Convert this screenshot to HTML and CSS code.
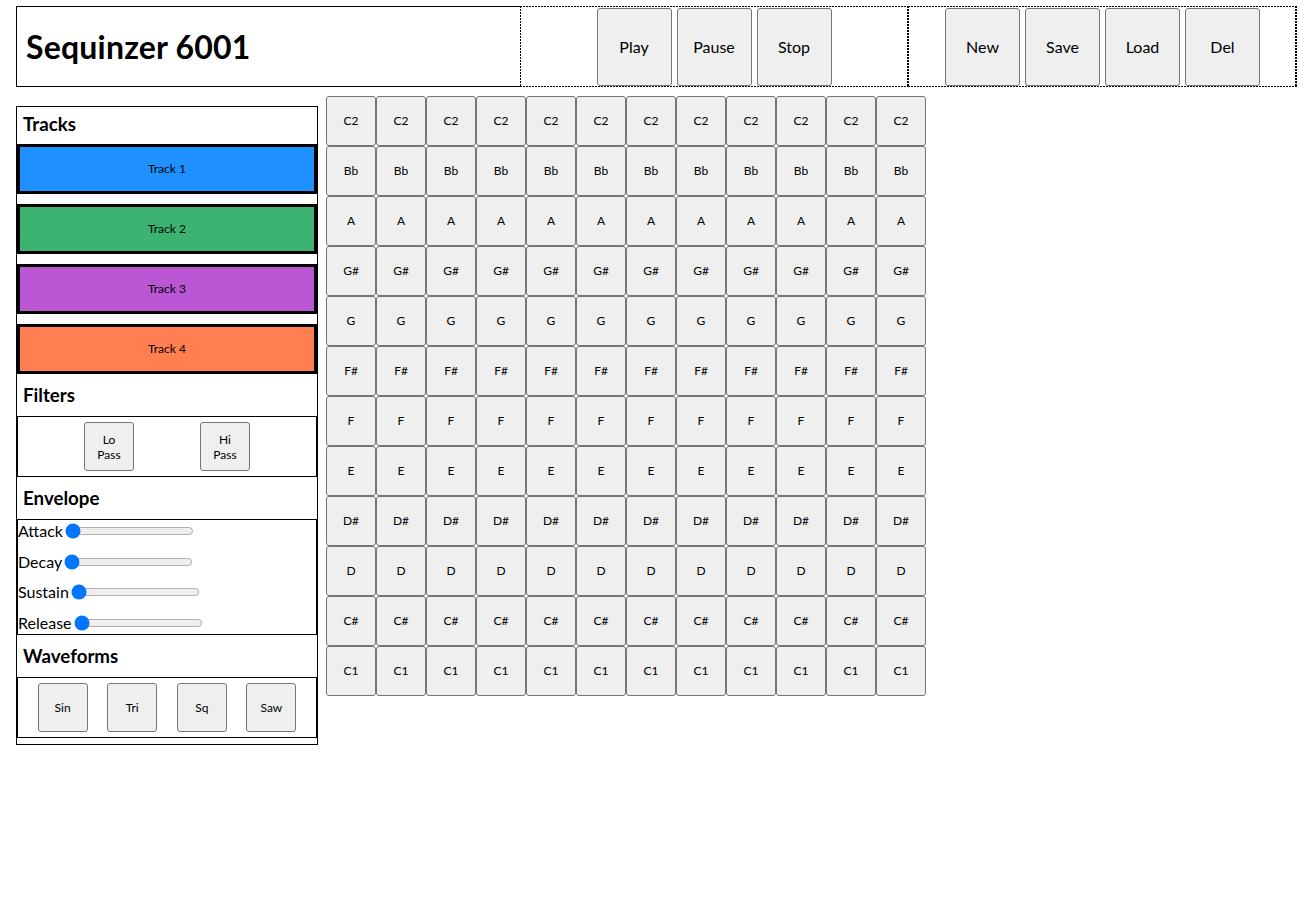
FILE: index.html
```html
<!DOCTYPE html>
<html>
<head>
<meta charset="utf-8">
<title>Sequinzer 6001</title>
<link rel="stylesheet" href="styles.css">
</head>
<body>
<div class="page">
  <header class="header">
    <div class="title-box"><h1 class="title">Sequinzer 6001</h1></div>
    <div class="group group-transport">
      <button class="hbtn">Play</button>
      <button class="hbtn">Pause</button>
      <button class="hbtn">Stop</button>
    </div>
    <div class="group group-file">
      <button class="hbtn">New</button>
      <button class="hbtn">Save</button>
      <button class="hbtn">Load</button>
      <button class="hbtn">Del</button>
    </div>
  </header>

  <main class="main">
    <aside class="sidebar">
      <h3 class="sec-title sec-tracks">Tracks</h3>
      <div class="tracks">
        <button class="track track-1">Track 1</button>
        <button class="track track-2">Track 2</button>
        <button class="track track-3">Track 3</button>
        <button class="track track-4">Track 4</button>
      </div>

      <h3 class="sec-title">Filters</h3>
      <div class="box btn-box">
        <button class="sbtn">Lo<br>Pass</button>
        <button class="sbtn">Hi<br>Pass</button>
      </div>

      <h3 class="sec-title">Envelope</h3>
      <div class="box env-box">
        <div class="env-row"><label class="env-label">Attack</label><input class="env-range" type="range" min="0" max="100" value="0"></div>
        <div class="env-row"><label class="env-label">Decay</label><input class="env-range" type="range" min="0" max="100" value="0"></div>
        <div class="env-row"><label class="env-label">Sustain</label><input class="env-range" type="range" min="0" max="100" value="0"></div>
        <div class="env-row"><label class="env-label">Release</label><input class="env-range" type="range" min="0" max="100" value="0"></div>
      </div>

      <h3 class="sec-title">Waveforms</h3>
      <div class="box btn-box">
        <button class="sbtn">Sin</button>
        <button class="sbtn">Tri</button>
        <button class="sbtn">Sq</button>
        <button class="sbtn">Saw</button>
      </div>
    </aside>

    <section class="grid">
      <button class="cell">C2</button><button class="cell">C2</button><button class="cell">C2</button><button class="cell">C2</button><button class="cell">C2</button><button class="cell">C2</button><button class="cell">C2</button><button class="cell">C2</button><button class="cell">C2</button><button class="cell">C2</button><button class="cell">C2</button><button class="cell">C2</button>
      <button class="cell">Bb</button><button class="cell">Bb</button><button class="cell">Bb</button><button class="cell">Bb</button><button class="cell">Bb</button><button class="cell">Bb</button><button class="cell">Bb</button><button class="cell">Bb</button><button class="cell">Bb</button><button class="cell">Bb</button><button class="cell">Bb</button><button class="cell">Bb</button>
      <button class="cell">A</button><button class="cell">A</button><button class="cell">A</button><button class="cell">A</button><button class="cell">A</button><button class="cell">A</button><button class="cell">A</button><button class="cell">A</button><button class="cell">A</button><button class="cell">A</button><button class="cell">A</button><button class="cell">A</button>
      <button class="cell">G#</button><button class="cell">G#</button><button class="cell">G#</button><button class="cell">G#</button><button class="cell">G#</button><button class="cell">G#</button><button class="cell">G#</button><button class="cell">G#</button><button class="cell">G#</button><button class="cell">G#</button><button class="cell">G#</button><button class="cell">G#</button>
      <button class="cell">G</button><button class="cell">G</button><button class="cell">G</button><button class="cell">G</button><button class="cell">G</button><button class="cell">G</button><button class="cell">G</button><button class="cell">G</button><button class="cell">G</button><button class="cell">G</button><button class="cell">G</button><button class="cell">G</button>
      <button class="cell">F#</button><button class="cell">F#</button><button class="cell">F#</button><button class="cell">F#</button><button class="cell">F#</button><button class="cell">F#</button><button class="cell">F#</button><button class="cell">F#</button><button class="cell">F#</button><button class="cell">F#</button><button class="cell">F#</button><button class="cell">F#</button>
      <button class="cell">F</button><button class="cell">F</button><button class="cell">F</button><button class="cell">F</button><button class="cell">F</button><button class="cell">F</button><button class="cell">F</button><button class="cell">F</button><button class="cell">F</button><button class="cell">F</button><button class="cell">F</button><button class="cell">F</button>
      <button class="cell">E</button><button class="cell">E</button><button class="cell">E</button><button class="cell">E</button><button class="cell">E</button><button class="cell">E</button><button class="cell">E</button><button class="cell">E</button><button class="cell">E</button><button class="cell">E</button><button class="cell">E</button><button class="cell">E</button>
      <button class="cell">D#</button><button class="cell">D#</button><button class="cell">D#</button><button class="cell">D#</button><button class="cell">D#</button><button class="cell">D#</button><button class="cell">D#</button><button class="cell">D#</button><button class="cell">D#</button><button class="cell">D#</button><button class="cell">D#</button><button class="cell">D#</button>
      <button class="cell">D</button><button class="cell">D</button><button class="cell">D</button><button class="cell">D</button><button class="cell">D</button><button class="cell">D</button><button class="cell">D</button><button class="cell">D</button><button class="cell">D</button><button class="cell">D</button><button class="cell">D</button><button class="cell">D</button>
      <button class="cell">C#</button><button class="cell">C#</button><button class="cell">C#</button><button class="cell">C#</button><button class="cell">C#</button><button class="cell">C#</button><button class="cell">C#</button><button class="cell">C#</button><button class="cell">C#</button><button class="cell">C#</button><button class="cell">C#</button><button class="cell">C#</button>
      <button class="cell">C1</button><button class="cell">C1</button><button class="cell">C1</button><button class="cell">C1</button><button class="cell">C1</button><button class="cell">C1</button><button class="cell">C1</button><button class="cell">C1</button><button class="cell">C1</button><button class="cell">C1</button><button class="cell">C1</button><button class="cell">C1</button>
    </section>
  </main>
</div>
</body>
</html>
```

FILE: styles.css
```css
* {
  box-sizing: border-box;
}

html, body {
  margin: 0;
  padding: 0;
  background: #ffffff;
}

body {
  font-family: "Lato", "Open Sans", "DejaVu Sans", sans-serif;
  color: #000000;
}

.page {
  padding: 6px 14px 0 16px;
}

/* ---------- header ---------- */
.header {
  display: flex;
  height: 81px;
  width: 1281px;
}

.title-box {
  width: 504px;
  height: 81px;
  border: 1px solid #000000;
  border-right: none;
  display: flex;
  align-items: center;
  padding-left: 9px;
}

.title {
  margin: 0;
  font-size: 32px;
  font-weight: 700;
  line-height: 1;
  letter-spacing: 0.2px;
}

/* dotted frames drawn as 2px-on / 1px-off dashes */
.group {
  height: 81px;
  display: flex;
  justify-content: center;
  align-items: flex-start;
  gap: 5px;
  padding-top: 2px;
  background-image:
    repeating-linear-gradient(90deg, #000 0 2px, transparent 2px 3px),
    repeating-linear-gradient(90deg, #000 0 2px, transparent 2px 3px),
    repeating-linear-gradient(180deg, #000 0 2px, transparent 2px 3px),
    repeating-linear-gradient(180deg, #000 0 2px, transparent 2px 3px);
  background-repeat: no-repeat;
  background-size: 100% 1px, 100% 1px, 1px 100%, 1px 100%;
  background-position: left top, left bottom, left top, right top;
}

.group-transport {
  width: 388px;
}

.group-file {
  width: 389px;
  background-size: 100% 1px, 100% 1px, 1px 100%, 2px 100%;
}

.hbtn {
  width: 75px;
  height: 78px;
  background: #efefef;
  border: 1px solid #767676;
  border-radius: 3px;
  font-family: inherit;
  font-size: 16px;
  line-height: 1;
  color: #000000;
  padding: 0;
}

/* ---------- main ---------- */
.main {
  display: flex;
  align-items: flex-start;
  gap: 8px;
  margin-top: 9px;
}

.sidebar {
  width: 302px;
  margin-top: 10px;
  border: 1px solid #000000;
  padding-bottom: 6px;
}

.sec-title {
  margin: 0;
  height: 42px;
  display: flex;
  align-items: center;
  padding-left: 6px;
  font-size: 18.72px;
  font-weight: 700;
}

.sec-tracks {
  height: 37px;
  padding-bottom: 4px;
}

.tracks {
  display: flex;
  flex-direction: column;
  gap: 10px;
}

.track {
  width: 300px;
  height: 50px;
  border: 3px solid #000000;
  border-radius: 0;
  font-family: inherit;
  font-size: 12px;
  line-height: 1;
  color: #000000;
  padding: 0;
}

.track-1 { background: #1e90ff; }
.track-2 { background: #3cb371; }
.track-3 { background: #ba55d3; }
.track-4 { background: #ff7f50; }

.box {
  width: 300px;
  border: 1px solid #000000;
}

.btn-box {
  height: 61px;
  display: flex;
  justify-content: space-evenly;
  align-items: center;
}

.sbtn {
  width: 50px;
  height: 49px;
  background: #efefef;
  border: 1px solid #767676;
  border-radius: 3px;
  font-family: inherit;
  font-size: 12px;
  line-height: 15px;
  color: #000000;
  padding: 0;
}

.env-box {
  display: flex;
  flex-direction: column;
  gap: 9px;
  height: 116px;
}

.env-row {
  height: 22px;
  display: flex;
  align-items: center;
}

.env-label {
  font-size: 16px;
  line-height: 1;
}

.env-range {
  width: 129px;
  margin: 2px;
}

/* ---------- grid ---------- */
.grid {
  display: grid;
  grid-template-columns: repeat(12, 50px);
  grid-auto-rows: 50px;
}

.cell {
  width: 50px;
  height: 50px;
  background: #efefef;
  border: 1px solid #767676;
  border-radius: 3px;
  font-family: inherit;
  font-size: 12px;
  line-height: 1;
  color: #000000;
  padding: 0 0 1px;
}
```
